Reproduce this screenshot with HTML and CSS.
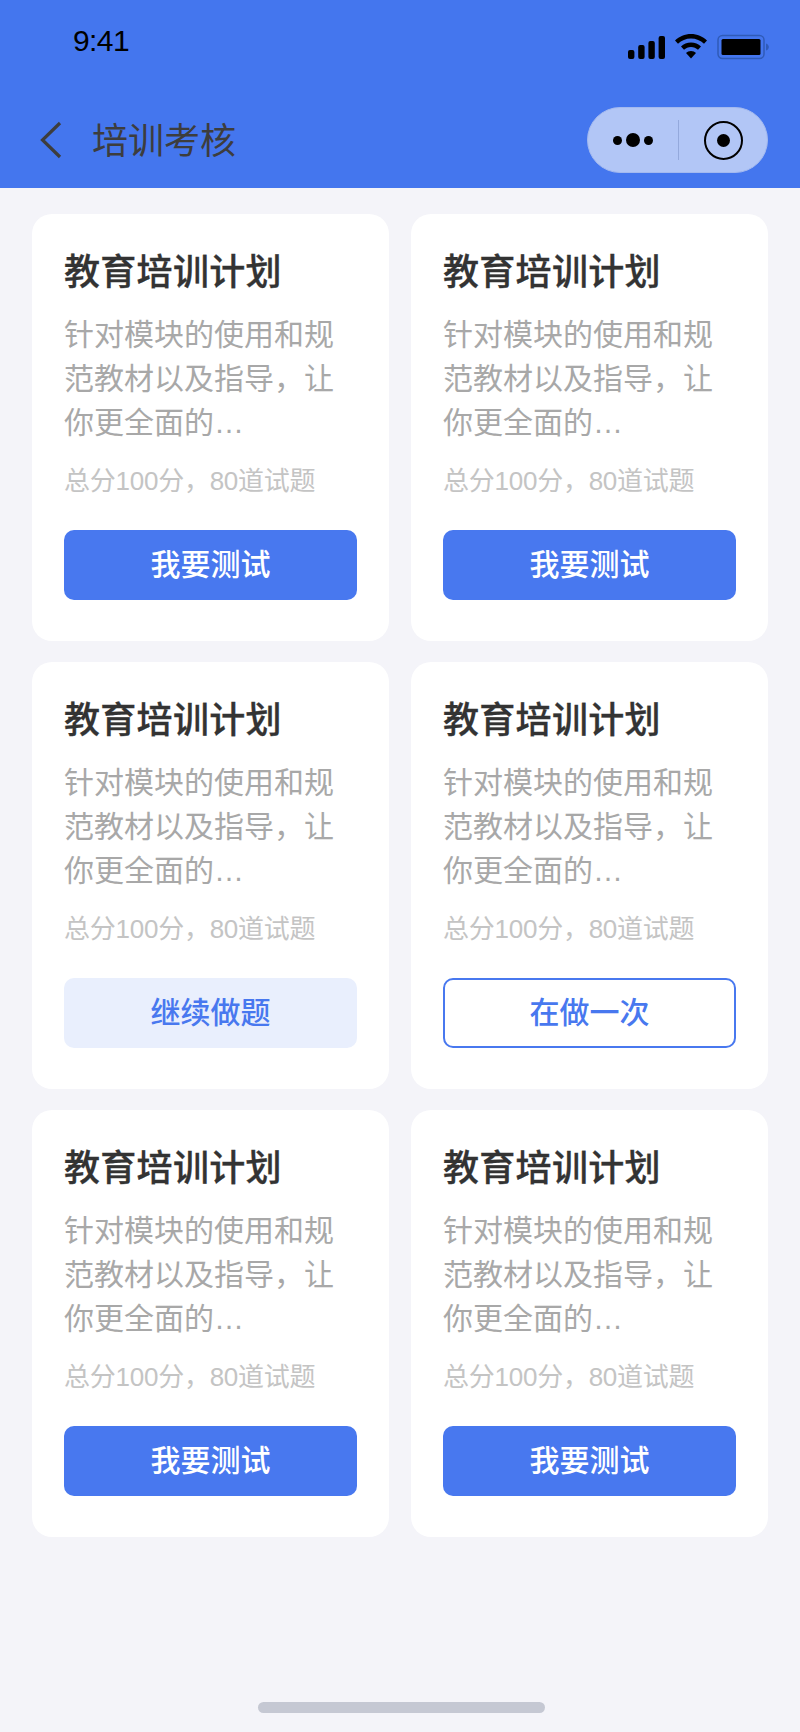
FILE: index.html
```html
<!DOCTYPE html>
<html lang="zh-CN">
<head>
<meta charset="utf-8">
<title>培训考核</title>
<link rel="stylesheet" href="styles.css">
</head>
<body>
<div class="page">
  <header class="header">
    <div class="status">
      <span class="time">9:41</span>
      <div class="status-icons">
        <svg width="37" height="26" viewBox="0 0 37 26"><rect x="0" y="16" width="6.400" height="9" rx="2"/><rect x="10.200" y="11" width="6.400" height="14" rx="2"/><rect x="20.400" y="7" width="6.400" height="18" rx="2"/><rect x="30.600" y="2" width="6.400" height="23" rx="2"/></svg>
        <svg width="32" height="26" viewBox="0 0 32 26"><path d="M16 0C9.800 0 4.200 2.500 0 6.500L3 9.800C6.400 6.500 11 4.500 16 4.500s9.600 2 13 5.300L32 6.500C27.800 2.500 22.200 0 16 0z"/><path d="M16 8.500c-3.900 0-7.400 1.500-10 4l3 3.300c1.800-1.700 4.300-2.800 7-2.800s5.200 1.100 7 2.800l3-3.300c-2.600-2.500-6.100-4-10-4z"/><path d="M16 17c-2 0-3.800.8-5 2l5 5.500 5-5.500c-1.200-1.200-3-2-5-2z"/></svg>
        <svg width="53" height="26" viewBox="0 0 53 26"><rect x="1" y="1.500" width="46" height="23" rx="4.500" fill="none" stroke="#2f5bb8" stroke-width="1.500"/><rect x="4.500" y="5" width="39" height="16" rx="1.500"/><path d="M49 9.500c1.800.6 2.800 2 2.800 3.500S50.800 16 49 16.500z" fill="#2f5bb8"/></svg>
      </div>
    </div>
    <div class="nav">
      <svg class="back" width="24" height="38" viewBox="0 0 24 38"><path d="M21 2 3.500 19 21 36" fill="none" stroke="#3d3d3d" stroke-width="3.200"/></svg>
      <h1 class="nav-title">培训考核</h1>
      <div class="capsule">
        <div class="more"><i class="dot"></i><i class="dot dot-big"></i><i class="dot"></i></div>
        <div class="divider"></div>
        <div class="close"><i class="close-dot"></i></div>
      </div>
    </div>
  </header>
  <main class="grid">
    <article class="card">
      <h2 class="card-title">教育培训计划</h2>
      <p class="card-desc">针对模块的使用和规范教材以及指导，让你更全面的…</p>
      <p class="card-meta">总分100分，80道试题</p>
      <button class="btn btn-primary">我要测试</button>
    </article>
    <article class="card">
      <h2 class="card-title">教育培训计划</h2>
      <p class="card-desc">针对模块的使用和规范教材以及指导，让你更全面的…</p>
      <p class="card-meta">总分100分，80道试题</p>
      <button class="btn btn-primary">我要测试</button>
    </article>
    <article class="card">
      <h2 class="card-title">教育培训计划</h2>
      <p class="card-desc">针对模块的使用和规范教材以及指导，让你更全面的…</p>
      <p class="card-meta">总分100分，80道试题</p>
      <button class="btn btn-soft">继续做题</button>
    </article>
    <article class="card">
      <h2 class="card-title">教育培训计划</h2>
      <p class="card-desc">针对模块的使用和规范教材以及指导，让你更全面的…</p>
      <p class="card-meta">总分100分，80道试题</p>
      <button class="btn btn-outline">在做一次</button>
    </article>
    <article class="card">
      <h2 class="card-title">教育培训计划</h2>
      <p class="card-desc">针对模块的使用和规范教材以及指导，让你更全面的…</p>
      <p class="card-meta">总分100分，80道试题</p>
      <button class="btn btn-primary">我要测试</button>
    </article>
    <article class="card">
      <h2 class="card-title">教育培训计划</h2>
      <p class="card-desc">针对模块的使用和规范教材以及指导，让你更全面的…</p>
      <p class="card-meta">总分100分，80道试题</p>
      <button class="btn btn-primary">我要测试</button>
    </article>
  </main>
  <div class="home-bar"></div>
</div>
</body>
</html>
```
FILE: styles.css
```css
* { box-sizing: border-box; }
html, body { margin: 0; padding: 0; }
body {
  background: #f4f4f9;
  font-family: "Liberation Sans", "Noto Sans CJK SC", sans-serif;
}
.page {
  position: relative;
  width: 800px;
  height: 1732px;
  background: #f4f4f9;
  overflow: hidden;
}
.header {
  height: 188px;
  background: #4476ee;
  display: flex;
  flex-direction: column;
}
.status {
  height: 88px;
  padding: 21px 30px 0 73px;
  display: flex;
  justify-content: space-between;
  align-items: flex-start;
}
.time {
  font-size: 30px;
  line-height: 40px;
  letter-spacing: -0.6px;
  color: #000;
}
.status-icons {
  display: flex;
  align-items: flex-start;
  gap: 10px;
  padding-top: 13px;
}
.status-icons svg { display: block; }
.nav {
  height: 100px;
  padding: 4px 32px 0 39px;
  display: flex;
  align-items: center;
  gap: 29px;
}
.back { display: block; }
.nav-title {
  flex: 1;
  margin: 4px 0 0;
  font-size: 36px;
  line-height: 50px;
  font-weight: 400;
  color: #3d3d3d;
}
.capsule {
  width: 181px;
  height: 66px;
  border-radius: 33px;
  background: #b2c6f6;
  border: 1px solid #a3b9ef;
  display: flex;
  align-items: center;
}
.more {
  width: 90px;
  display: flex;
  align-items: center;
  justify-content: center;
  gap: 4px;
}
.dot { width: 9px; height: 9px; border-radius: 50%; background: #000; }
.dot-big { width: 14px; height: 14px; }
.divider { width: 1px; height: 40px; background: #94a9dc; }
.close {
  flex: 1;
  height: 40px;
  display: flex;
  align-items: center;
  justify-content: center;
}
.close-dot {
  width: 39px;
  height: 39px;
  border: 2px solid #000;
  border-radius: 50%;
  display: flex;
  align-items: center;
  justify-content: center;
}
.close-dot::after {
  content: "";
  width: 13px;
  height: 13px;
  border-radius: 50%;
  background: #000;
}
.grid {
  padding: 26px 32px 0;
  display: grid;
  grid-template-columns: 357px 357px;
  grid-auto-rows: 427px;
  column-gap: 22px;
  row-gap: 21px;
}
.card {
  background: #fff;
  border-radius: 20px;
  padding: 34px 32px 41px;
  display: flex;
  flex-direction: column;
}
.card-title {
  margin: 0;
  font-size: 36px;
  line-height: 50px;
  font-weight: 500;
  letter-spacing: 0.3px;
  -webkit-text-stroke: 0.3px #333;
  color: #333;
}
.card-desc {
  margin: 15px 0 0;
  width: 275px;
  font-size: 30px;
  line-height: 44px;
  color: #a8a8a8;
}
.card-meta {
  margin: 18px 0 0;
  font-size: 26px;
  line-height: 36px;
  letter-spacing: -0.25px;
  color: #c4c4c4;
}
.btn {
  margin-top: auto;
  height: 70px;
  width: 293px;
  border-radius: 10px;
  border: 0;
  padding: 0;
  font-family: inherit;
  font-size: 30px;
  font-weight: 500;
  line-height: 42px;
}
.btn-primary { background: #4878ef; color: #fff; }
.btn-soft { background: #e9effd; color: #4878ef; }
.btn-outline { background: #fff; color: #4878ef; border: 2px solid #4878ef; }
.home-bar {
  position: absolute;
  left: 258px;
  top: 1702px;
  width: 287px;
  height: 11px;
  border-radius: 6px;
  background: #c5c8d3;
}
```
